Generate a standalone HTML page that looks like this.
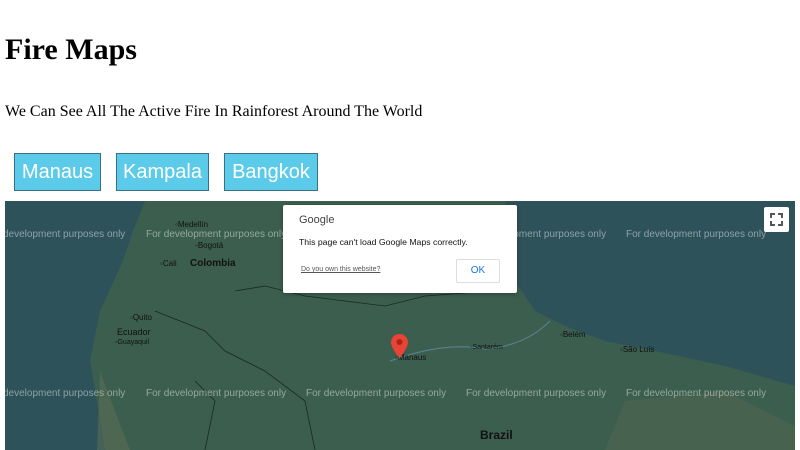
<!DOCTYPE html>
<html><head><style>
body{margin:0;width:800px;height:450px;overflow:hidden;background:#fff;font-family:"Liberation Serif",serif;position:relative}
h1{position:absolute;left:5px;top:32px;margin:0;font-size:30px;font-weight:bold;line-height:35px}
p.s{position:absolute;left:5px;top:103px;margin:0;font-size:16px}
.b{position:absolute;top:153px;background:#5bcbe9;border:1px solid #3a6f86;color:#fff;font-family:"Liberation Sans",sans-serif;font-size:20px;line-height:36px;text-align:center;box-sizing:border-box;height:38px}
.map{position:absolute;left:5px;top:201px;width:790px;height:249px;overflow:hidden;background:#3c5e4e}
.wm{position:absolute;font-family:"Liberation Sans",sans-serif;font-size:10px;color:rgba(255,255,255,.45);white-space:nowrap}
.lb{position:absolute;font-family:"Liberation Sans",sans-serif;font-size:8px;color:#111;white-space:nowrap}
.dlg{position:absolute;left:283px;top:205px;width:234px;height:88px;background:#fff;border-radius:2px;box-shadow:0 1px 4px rgba(0,0,0,.3);font-family:"Liberation Sans",sans-serif}
</style></head><body>
<h1>Fire Maps</h1>
<p class="s">We Can See All The Active Fire In Rainforest Around The World</p>
<div class="b" style="left:14px;width:87px">Manaus</div>
<div class="b" style="left:116px;width:93px">Kampala</div>
<div class="b" style="left:224px;width:94px">Bangkok</div>
<div class="map">
<svg width="790" height="249" style="position:absolute;left:0;top:0">
<polygon points="0,0 140,0 128,30 118,60 95,110 85,160 92,200 100,249 0,249" fill="#2e5259"/>
<polygon points="500,0 790,0 790,185 720,165 650,150 600,140 560,125 530,110 510,80 505,40" fill="#2e5259"/>
<polygon points="95,170 110,210 125,249 92,249" fill="#5d6f55" opacity=".5"/>
<polygon points="620,200 720,190 790,225 790,249 600,249" fill="#57694f" opacity=".4"/>
<g fill="none" stroke="#1a2a22" stroke-width=".8"><path d="M230,90 L260,85 300,95 340,100 380,105 420,95 460,92 500,80"/><path d="M150,110 L200,130 220,150 260,170 300,200 310,249"/><path d="M200,249 L210,200 190,180"/></g>
<path d="M385,160 Q440,140 480,148 Q520,145 545,120" stroke="#56808a" stroke-width="1.2" fill="none"/>
</svg>
<div class="wm" style="left:-2px;top:28px">development purposes only</div>
<div class="wm" style="left:141px;top:28px">For development purposes only</div>
<div class="wm" style="left:461px;top:28px">For development purposes only</div>
<div class="wm" style="left:621px;top:28px">For development purposes only</div>
<div class="wm" style="left:-2px;top:187px">development purposes only</div>
<div class="wm" style="left:141px;top:187px">For development purposes only</div>
<div class="wm" style="left:301px;top:187px">For development purposes only</div>
<div class="wm" style="left:461px;top:187px">For development purposes only</div>
<div class="wm" style="left:621px;top:187px">For development purposes only</div>
<div class="lb" style="left:170px;top:19px">◦Medellín</div>
<div class="lb" style="left:190px;top:40px">◦Bogotá</div>
<div class="lb" style="left:155px;top:58px">◦Cali</div>
<div class="lb" style="left:185px;top:57px;font-size:10px;font-weight:bold">Colombia</div>
<div class="lb" style="left:112px;top:126px;font-size:9px">Ecuador</div>
<div class="lb" style="left:110px;top:138px;font-size:7px">◦Guayaquil</div>
<div class="lb" style="left:125px;top:112px">◦Quito</div>
<div class="lb" style="left:390px;top:152px">◦Manaus</div>
<div class="lb" style="left:465px;top:143px;font-size:7px">◦Santarém</div>
<div class="lb" style="left:555px;top:129px">◦Belém</div>
<div class="lb" style="left:615px;top:144px">◦São Luís</div>
<div class="lb" style="left:475px;top:227px;font-size:12px;font-weight:bold">Brazil</div>
</div>
<svg style="position:absolute;left:391px;top:334px" width="17" height="24" viewBox="0 0 17 24"><path d="M8.5,0C3.8,0 0,3.6 0,8.2 0,14 8.5,24 8.5,24S17,14 17,8.2C17,3.6 13.2,0 8.5,0z" fill="#ea4335"/><circle cx="8.5" cy="8" r="3" fill="#a52714"/></svg>
<div style="position:absolute;left:764px;top:207px;width:25px;height:25px;background:#fff;border-radius:2px"><svg width="25" height="25"><path d="M7,11V7h4M14,7h4v4M18,14v4h-4M11,18H7v-4" stroke="#555" stroke-width="2" fill="none"/></svg></div>
<div class="dlg">
<div style="position:absolute;left:16px;top:9px;font-size:11px;color:#444">Google</div>
<div style="position:absolute;left:16px;top:32px;font-size:8.7px;color:#111">This page can't load Google Maps correctly.</div>
<div style="position:absolute;left:18px;top:61px;font-size:7px;color:#555;text-decoration:underline">Do you own this website?</div>
<div style="position:absolute;left:173px;top:54px;width:42px;height:22px;border:1px solid #ddd;border-radius:2px;font-size:10px;color:#1a73e8;text-align:center;line-height:22px">OK</div>
</div>
</body></html>
